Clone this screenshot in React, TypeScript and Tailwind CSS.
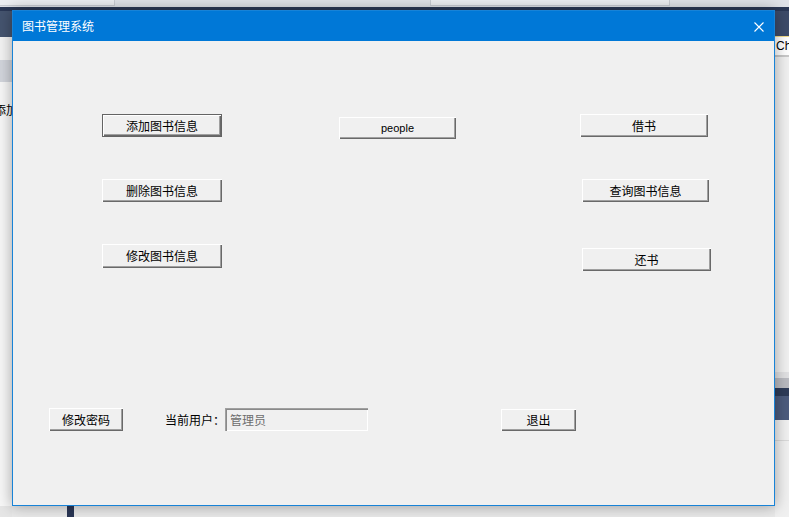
import type { ReactNode } from 'react';

const CJK = '[font-family:"Noto_Sans_CJK_SC","Liberation_Sans",sans-serif]';

interface BtnProps {
  children: ReactNode;
  className?: string;
  isDefault?: boolean;
}

// classic win32 push button
function WinButton({ children, className = '', isDefault = false }: BtnProps) {
  const frame = isDefault
    ? 'border border-[#646464] shadow-[inset_1px_1px_0_#ffffff,inset_-1px_-1px_0_#696969,inset_-2px_-2px_0_#a0a0a0]'
    : 'shadow-[inset_1px_1px_0_#ffffff,inset_-1px_-1px_0_#696969,inset_-2px_-2px_0_#a0a0a0]';
  return (
    <button
      className={`flex shrink-0 items-center justify-center bg-[#f0f0f0] text-[12px] leading-none text-black ${CJK} ${frame} ${className}`}
    >
      {children}
    </button>
  );
}

export default function App() {
  return (
    <div className="relative h-[517px] w-[789px] overflow-hidden bg-[#f0f0f0]">
      {/* desktop / window behind */}
      <div className="flex h-full flex-col">
        <div className="flex h-[7px] bg-[#dfe2e8]">
          <div className="h-[6px] w-[115px] border-b border-r border-[#c9ccd3] bg-[#eceef2]" />
          <div className="ml-[315px] h-[6px] w-[240px] border-b border-l border-r border-[#c9ccd3] bg-[#eceef2]" />
        </div>
        <div className="h-[4px] bg-[#2b3856]" />
        <div className="flex flex-1">
          <div className="flex w-[12px] flex-col overflow-hidden">
            <div className="h-[26px] bg-[#45546f]" />
            <div className="h-[23px] bg-[#f3f3f3]" />
            <div className="h-[22px] bg-[#d2d5dc]" />
            <div className="flex-1 bg-[#f7f7f7]">
              <div className={`-ml-[6px] mt-[22px] w-[40px] text-[12px] leading-none text-black ${CJK}`}>添加</div>
            </div>
            <div className="flex h-[11px] bg-[#e6e6e6]" />
          </div>
          <div className="flex-1 bg-[#e9e9e9]" />
          <div className="flex w-[14px] flex-col overflow-hidden">
            <div className="h-[25px] bg-[#3d4b69]" />
            <div className="h-[1px] bg-[#f2dc8a]" />
            <div className="flex h-[18px] items-center bg-white pl-[1px] text-[12px] leading-none text-black [font-family:'Liberation_Sans',sans-serif]">
              Ch
            </div>
            <div className="h-[2px] bg-[#c8c8c8]" />
            <div className="h-[315px] bg-[#f0f0f0]" />
            <div className="h-[6px] bg-[#e0e0e2]" />
            <div className="h-[10px] bg-[#b9bac0]" />
            <div className="h-[8px] bg-[#2e3b58]" />
            <div className="h-[24px] bg-[#4c5b7d]" />
            <div className="h-[21px] border-b border-[#d9d9d9] bg-[#f0f0f0]" />
            <div className="flex-1 bg-[#f0f0f0]" />
          </div>
        </div>
      </div>
      <div className="absolute left-[67px] top-[506px] h-[11px] w-[7px] bg-[#2a3655]" />

      {/* dialog window */}
      <div className="absolute left-[12px] top-[10px] flex h-[496px] w-[763px] flex-col border border-[#1883d7] bg-[#f0f0f0] shadow-[0_0_14px_rgba(0,0,0,0.35)]">
        <div className="flex h-[30px] shrink-0 items-center justify-between bg-[#0078d7] pl-[9px] pr-[10px]">
          <span className={`text-[12px] leading-none text-white ${CJK}`}>图书管理系统</span>
          <svg width="10" height="10" viewBox="0 0 10 10" className="mt-[1px]">
            <path d="M0.5 0.5 L9.5 9.5 M9.5 0.5 L0.5 9.5" stroke="#ffffff" strokeWidth="1.1" fill="none" />
          </svg>
        </div>

        <div className="flex flex-1 flex-col">
          {/* row 1 */}
          <div className="mt-[73px] flex h-[65px] items-start">
            <WinButton isDefault className="ml-[89px] h-[23px] w-[120px]">添加图书信息</WinButton>
            <WinButton className="ml-[117px] mt-[3px] h-[22px] w-[117px] !text-[11px] ![font-family:'Liberation_Sans',sans-serif]">
              people
            </WinButton>
            <WinButton className="ml-[124px] h-[23px] w-[128px]">借书</WinButton>
          </div>

          {/* row 2 */}
          <div className="flex h-[65px] items-start">
            <WinButton className="ml-[89px] h-[23px] w-[120px]">删除图书信息</WinButton>
            <WinButton className="ml-[360px] h-[23px] w-[127px]">查询图书信息</WinButton>
          </div>

          {/* row 3 */}
          <div className="flex h-[30px] items-start">
            <WinButton className="ml-[89px] h-[24px] w-[120px]">修改图书信息</WinButton>
            <WinButton className="ml-[360px] mt-[4px] h-[23px] w-[129px]">还书</WinButton>
          </div>

          {/* bottom row */}
          <div className="mt-[134px] flex h-[24px] items-start">
            <WinButton className="ml-[36px] h-[23px] w-[74px]">修改密码</WinButton>
            <div className={`ml-[42px] flex h-[23px] w-[60px] items-center text-[12px] leading-none text-black ${CJK}`}>
              当前用户：
            </div>
            <div
              className={`flex h-[23px] w-[143px] items-center bg-[#f0f0f0] pl-[5px] text-[12px] leading-none text-[#6d6d6d] ${CJK} shadow-[inset_1px_1px_0_#a0a0a0,inset_2px_2px_0_#8a8a8a,inset_-1px_-1px_0_#ffffff,inset_-2px_-2px_0_#f0f0f0]`}
            >
              管理员
            </div>
            <WinButton className="ml-[133px] mt-[1px] h-[22px] w-[75px]">退出</WinButton>
          </div>
        </div>
      </div>
    </div>
  );
}
